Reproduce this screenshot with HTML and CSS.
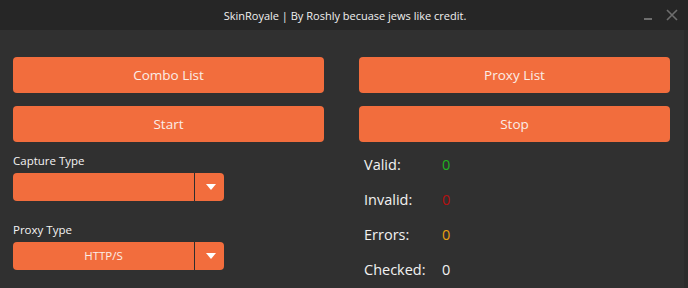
FILE: index.html
```html
<!DOCTYPE html>
<html>
<head>
<meta charset="utf-8">
<link rel="stylesheet" href="styles.css">
</head>
<body>
<div class="window">
  <div class="titlebar">
    <div class="title">SkinRoyale | By Roshly becuase jews like credit.</div>
    <div class="controls">
      <svg class="ctl" width="10" height="12" viewBox="0 0 10 12"><rect x="1" y="9" width="8" height="2" fill="#6e6e6e"/></svg>
      <svg class="ctl" width="14" height="14" viewBox="0 0 14 14"><path d="M2 2 L12 12 M12 2 L2 12" stroke="#6e6e6e" stroke-width="1.6"/></svg>
    </div>
  </div>
  <div class="content">
    <div class="col">
      <button class="btn">Combo List</button>
      <button class="btn">Start</button>
      <div class="field">
        <div class="label">Capture Type</div>
        <div class="select">
          <div class="select-value"></div>
          <div class="select-arrow"><span class="tri"></span></div>
        </div>
      </div>
      <div class="field">
        <div class="label">Proxy Type</div>
        <div class="select">
          <div class="select-value">HTTP/S</div>
          <div class="select-arrow"><span class="tri"></span></div>
        </div>
      </div>
    </div>
    <div class="col">
      <button class="btn">Proxy List</button>
      <button class="btn">Stop</button>
      <div class="stats">
        <div class="stat"><span class="stat-name">Valid:</span><span class="stat-val green">0</span></div>
        <div class="stat"><span class="stat-name">Invalid:</span><span class="stat-val red">0</span></div>
        <div class="stat"><span class="stat-name">Errors:</span><span class="stat-val orange">0</span></div>
        <div class="stat"><span class="stat-name">Checked:</span><span class="stat-val white">0</span></div>
      </div>
    </div>
  </div>
</div>
</body>
</html>
```

FILE: styles.css
```css
html, body {
  margin: 0;
  padding: 0;
  background: #303030;
}
body {
  width: 688px;
  height: 288px;
  overflow: hidden;
  font-family: "Open Sans", "Noto Sans", "DejaVu Sans", sans-serif;
  color: #f2f2f2;
}
.window {
  width: 688px;
  height: 288px;
  display: flex;
  flex-direction: column;
}
.titlebar {
  height: 30px;
  background: #262626;
  display: flex;
  align-items: center;
  position: relative;
  flex-shrink: 0;
}
.title {
  flex: 1;
  text-align: center;
  font-size: 11px;
  color: #f0f0f0;
  padding-left: 2px;
}
.controls {
  position: absolute;
  right: 9px;
  top: 8px;
  display: flex;
  gap: 12px;
  align-items: center;
}
.ctl { display: block; }
.content {
  flex: 1;
  display: grid;
  grid-template-columns: 311px 311px;
  column-gap: 35px;
  padding: 27px 18px 0 13px;
  border-right: 4px solid #2b2b2b;
}
.col {
  display: flex;
  flex-direction: column;
}
.btn {
  height: 36px;
  border: none;
  border-radius: 4px;
  background: #f26d3d;
  color: #fbeee8;
  font-family: inherit;
  font-size: 13.5px;
  margin: 0 0 13px 0;
  padding: 0;
}
.btn:nth-child(2) { margin-bottom: 10px; }
.field {
  display: flex;
  flex-direction: column;
}
.label {
  font-size: 11.5px;
  height: 18px;
  line-height: 18px;
  margin-bottom: 3px;
  color: #f4f4f4;
}
.field + .field { margin-top: 20px; }
.select {
  width: 211px;
  height: 28px;
  display: flex;
  border-radius: 4px;
  background: #f26d3d;
  overflow: hidden;
}
.select-value {
  width: 181px;
  border-right: 1px solid #2e2e2e;
  text-align: center;
  line-height: 28px;
  font-size: 11.5px;
  color: #fbeee8;
}
.select-arrow {
  flex: 1;
  display: flex;
  align-items: center;
  justify-content: center;
}
.tri {
  width: 0;
  height: 0;
  border-left: 5px solid transparent;
  border-right: 5px solid transparent;
  border-top: 6px solid #ffffff;
  margin-left: 2px;
}
.stats {
  display: flex;
  flex-direction: column;
  padding-left: 5px;
  margin-top: -5px;
}
.stat {
  height: 35px;
  display: flex;
  align-items: center;
  font-size: 14.5px;
}
.stat-name {
  width: 78px;
  color: #f2f2f2;
}
.green { color: #20b020; }
.red { color: #b51010; }
.orange { color: #e8a010; }
.white { color: #f2f2f2; }
```
